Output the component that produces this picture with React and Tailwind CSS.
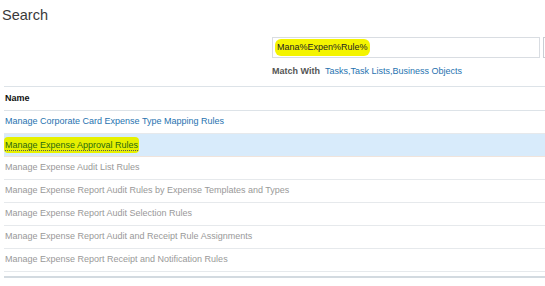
import React from 'react'

const rows = [
  { label: 'Manage Corporate Card Expense Type Mapping Rules', kind: 'link' },
  { label: 'Manage Expense Approval Rules', kind: 'selected' },
  { label: 'Manage Expense Audit List Rules', kind: 'muted' },
  { label: 'Manage Expense Report Audit Rules by Expense Templates and Types', kind: 'muted' },
  { label: 'Manage Expense Report Audit Selection Rules', kind: 'muted' },
  { label: 'Manage Expense Report Audit and Receipt Rule Assignments', kind: 'muted' },
  { label: 'Manage Expense Report Receipt and Notification Rules', kind: 'muted' },
]

export default function App() {
  return (
    <div className="w-[545px] h-[286px] overflow-hidden bg-white font-['Liberation_Sans',Arial,sans-serif] text-[9px]">
      <div className="pl-[2px] pt-[5px] text-[14.5px] leading-[20px] text-[#3a3a3a]">Search</div>

      {/* search box */}
      <div className="flex pl-[272px] pt-[12px] gap-[3px]">
        <div className="shrink-0 w-[268px] h-[21px] border border-[#d9dde2] flex items-center pl-[2px]">
          <span className="bg-[#f4f400] rounded-[6px] px-[2px] leading-[17px] text-[#222]">Mana%Expen%Rule%</span>
        </div>
        <div className="shrink-0 w-[10px] h-[21px] border border-[#c9ced4]" />
      </div>
      <div className="flex pl-[272px] pt-[7px] gap-[5px] leading-[12px]">
        <span className="font-bold text-[#555]">Match With</span>
        <span className="text-[#1f73b0]">Tasks,Task Lists,Business Objects</span>
      </div>

      {/* results table */}
      <div className="ml-[4px] mt-[9px] border-t border-[#dde3e8]">
        <div className="h-[24px] flex items-center pl-[1px] font-bold text-[#111] border-b border-[#dde3e8]">Name</div>
        {rows.map((r, i) => (
          <div
            key={i}
            className={
              r.kind === 'selected'
                ? 'h-[23px] flex items-center bg-[#d8ebfb] border-b border-[#f0e4dc]'
                : 'h-[23px] flex items-center pl-[1px] border-b border-[#e6e9ec]'
            }
          >
            {r.kind === 'link' && <span className="text-[#1f73b0]">{r.label}</span>}
            {r.kind === 'selected' && (
              <span className="bg-[#e6f000] rounded-[4px] px-[1px] leading-[16px] text-[#2a6a10] underline decoration-dotted decoration-[#556] underline-offset-2">{r.label}</span>
            )}
            {r.kind === 'muted' && <span className="text-[#999]">{r.label}</span>}
          </div>
        ))}
        <div className="h-[2px] mt-[4px] bg-[#d3dae0]" />
      </div>
    </div>
  )
}
